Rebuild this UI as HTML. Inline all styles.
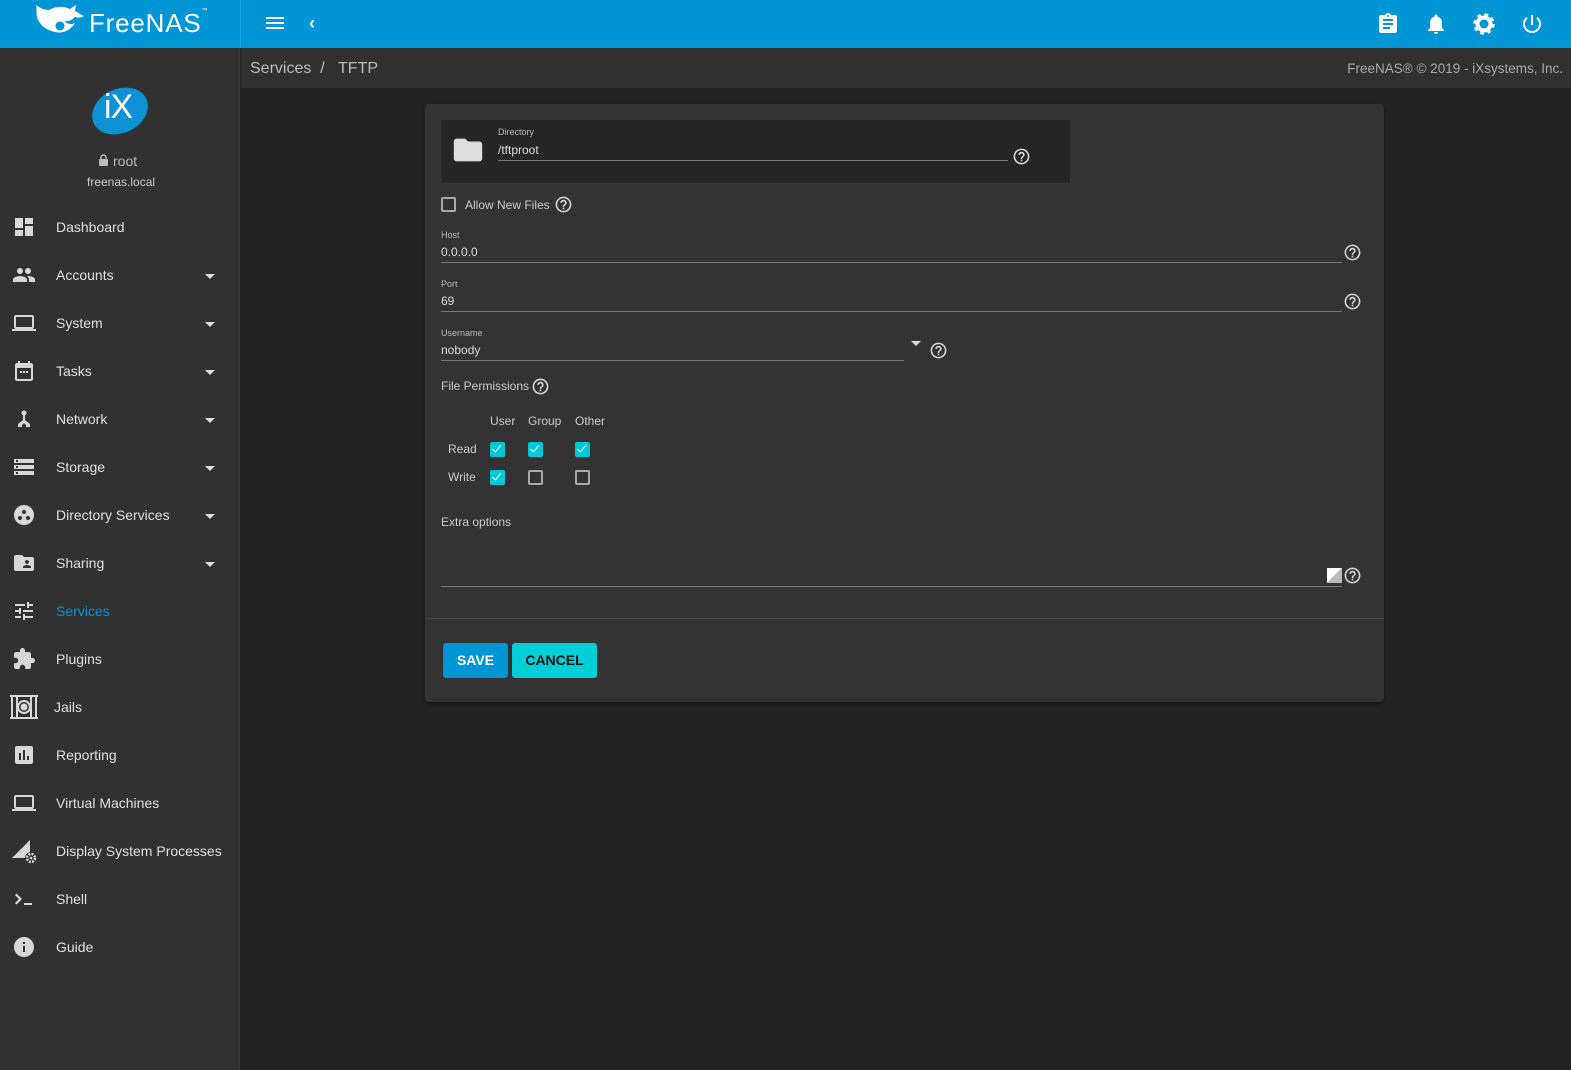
<!DOCTYPE html>
<html><head><meta charset="utf-8"><style>
*{margin:0;padding:0;box-sizing:border-box}
body{width:1571px;height:1070px;background:#232323;font-family:"Liberation Sans",sans-serif;color:#ddd;position:relative;overflow:hidden}
.a{position:absolute}
svg.i{position:absolute;fill:#d8d8d8}
.nav{position:absolute;left:56px;font-size:14px;color:#e0e0e0}
.car{position:absolute;left:205px;width:0;height:0;border-left:5px solid transparent;border-right:5px solid transparent;border-top:5px solid #ddd}
.lbl{position:absolute;font-size:9px;color:#bbb}
.val{position:absolute;font-size:12px;color:#ddd}
.ln{position:absolute;height:1px;background:#777}
.cb{position:absolute;width:15px;height:15px;border:2px solid #aaa;border-radius:2px}
.cc{position:absolute;width:15px;height:15px;background:#00c8d6;border-radius:2px}
.cc:after{content:"";position:absolute;left:4px;top:1px;width:4px;height:8px;border:solid #fff;border-width:0 1.5px 1.5px 0;transform:rotate(40deg)}
.t{position:absolute;font-size:12px;color:#ccc}
</style></head><body>
<svg width="0" height="0" style="position:absolute"><defs>
<symbol id="h" viewBox="0 0 24 24"><path d="M11 18h2v-2h-2v2zm1-16C6.48 2 2 6.48 2 12s4.48 10 10 10 10-4.48 10-10S17.52 2 12 2zm0 18c-4.41 0-8-3.59-8-8s3.59-8 8-8 8 3.59 8 8-3.59 8-8 8zm0-14c-2.21 0-4 1.79-4 4h2c0-1.1.9-2 2-2s2 .9 2 2c0 2-3 1.75-3 5h2c0-2.25 3-2.5 3-5 0-2.21-1.79-4-4-4z"/></symbol>
</defs></svg>
<div class="a" style="left:0;top:0;width:1571px;height:48px;background:#0095d5"></div>
<div class="a" style="left:240px;top:0;width:1px;height:48px;background:#1aa3de"></div>
<svg class="a" style="left:34px;top:3px" width="52" height="40" viewBox="0 0 52 40"><path fill="#fff" d="M2 2c4 3 8 5 13 5 7-4 15-4 21-1l6-4-1 6c4 2 6 4 9 5-3 2-6 2-9 1-3 3-7 5-11 4 3 3 7 4 11 2-4 7-12 11-20 9C11 27 5 21 3 14 2 9 3 5 2 2z"/><circle cx="26" cy="23" r="4.5" fill="#0095d5"/></svg>
<div class="a" style="left:89px;top:8px;font-size:26px;color:#fff;letter-spacing:0.8px">FreeNAS<span style="font-size:6px;vertical-align:top">™</span></div>
<div class="a" style="left:266px;top:17px;width:18px;height:2px;background:#fff;box-shadow:0 5px 0 #fff,0 10px 0 #fff"></div>
<div class="a" style="left:309px;top:13px;font-size:18px;color:#fff;font-weight:bold">‹</div>
<svg class="i" style="left:1376px;top:12px;fill:#fff" width="24" height="24" viewBox="0 0 24 24"><path d="M19 3h-4.18C14.4 1.84 13.3 1 12 1c-1.3 0-2.4.84-2.82 2H5c-1.1 0-2 .9-2 2v14c0 1.1.9 2 2 2h14c1.1 0 2-.9 2-2V5c0-1.1-.9-2-2-2zm-7 0c.55 0 1 .45 1 1s-.45 1-1 1-1-.45-1-1 .45-1 1-1zm2 14H7v-2h7v2zm3-4H7v-2h10v2zm0-4H7V7h10v2z"/></svg>
<svg class="i" style="left:1424px;top:12px;fill:#fff" width="24" height="24" viewBox="0 0 24 24"><path d="M12 22c1.1 0 2-.9 2-2h-4c0 1.1.89 2 2 2zm6-6v-5c0-3.07-1.64-5.64-4.5-6.32V4c0-.83-.67-1.5-1.5-1.5s-1.5.67-1.5 1.5v.68C7.630 5.36 6 7.92 6 11v5l-2 2v1h16v-1l-2-2z"/></svg>
<svg class="i" style="left:1472px;top:12px;fill:#fff" width="24" height="24" viewBox="0 0 24 24"><circle cx="12" cy="12" r="6.5" fill="none" stroke="#fff" stroke-width="4"/><circle cx="12" cy="12" r="9" fill="none" stroke="#fff" stroke-width="3.5" stroke-dasharray="3.5 3.6"/></svg>
<svg class="i" style="left:1520px;top:12px;fill:#fff" width="24" height="24" viewBox="0 0 24 24"><path d="M13 3h-2v10h2V3zm4.83 2.17l-1.42 1.42C17.99 7.86 19 9.81 19 12c0 3.87-3.13 7-7 7s-7-3.13-7-7c0-2.19 1.01-4.14 2.58-5.42L6.17 5.17C4.23 6.82 3 9.26 3 12c0 4.97 4.03 9 9 9s9-4.03 9-9c0-2.74-1.23-5.18-3.17-6.830z"/></svg>
<div class="a" style="left:0;top:48px;width:240px;height:1022px;background:#313131;border-right:1px solid #3a3a3a"></div>
<div class="a" style="left:91px;top:89px;width:58px;height:44px;border-radius:50%;background:#0f92d4;transform:rotate(-25deg)"></div>
<div class="a" style="left:104px;top:88px;font-size:34px;color:#fff;letter-spacing:-1px">iX</div>
<svg class="i" style="left:98px;top:154px;fill:#bbb" width="11" height="12" viewBox="0 0 11 12"><rect x="1" y="5" width="9" height="7" rx="1"/><path d="M3 5V3.5a2.5 2.5 0 015 0V5" fill="none" stroke="#bbb" stroke-width="1.5"/></svg>
<div class="a" style="left:113px;top:153px;font-size:14px;color:#bbb">root</div>
<div class="a" style="left:87px;top:175px;font-size:12px;color:#ccc">freenas.local</div>
<svg class="i" style="left:12px;top:215px" width="24" height="24" viewBox="0 0 24 24"><path d="M3 13h8V3H3v10zm0 8h8v-6H3v6zm10 0h8V11h-8v10zm0-18v6h8V3h-8z"/></svg>
<div class="nav" style="top:219px">Dashboard</div>
<svg class="i" style="left:12px;top:263px" width="24" height="24" viewBox="0 0 24 24"><path d="M16 11c1.66 0 2.99-1.34 2.99-3S17.66 5 16 5c-1.66 0-3 1.34-3 3s1.34 3 3 3zm-8 0c1.66 0 2.99-1.34 2.99-3S9.66 5 8 5C6.34 5 5 6.34 5 8s1.34 3 3 3zm0 2c-2.33 0-7 1.17-7 3.5V19h14v-2.5c0-2.33-4.67-3.5-7-3.5zm8 0c-.29 0-.62.02-.97.05 1.16.84 1.97 1.97 1.97 3.45V19h6v-2.5c0-2.33-4.67-3.5-7-3.5z"/></svg>
<div class="nav" style="top:267px">Accounts</div><div class="car" style="top:274px"></div>
<svg class="i" style="left:12px;top:311px" width="24" height="24" viewBox="0 0 24 24"><path d="M20 18c1.1 0 1.99-.9 1.99-2L22 6c0-1.1-.9-2-2-2H4c-1.1 0-2 .9-2 2v10c0 1.1.9 2 2 2H0v2h24v-2h-4zM4 6h16v10H4V6z"/></svg>
<div class="nav" style="top:315px">System</div><div class="car" style="top:322px"></div>
<svg class="i" style="left:12px;top:359px" width="24" height="24" viewBox="0 0 24 24"><path d="M19 4h-1V2h-2v2H8V2H6v2H5c-1.11 0-1.99.9-1.99 2L3 20c0 1.1.89 2 2 2h14c1.1 0 2-.9 2-2V6c0-1.1-.9-2-2-2zm0 16H5V9h14v11zM8 12h2v2H8zm3 0h2v2h-2zm3 0h2v2h-2z"/></svg>
<div class="nav" style="top:363px">Tasks</div><div class="car" style="top:370px"></div>
<svg class="i" style="left:12px;top:407px" width="24" height="24" viewBox="0 0 24 24"><circle cx="12" cy="6" r="2.5"/><path d="M11 8h2v5l5 4v3h-4v-2l-2-2-2 2v2H6v-3l5-4z"/></svg>
<div class="nav" style="top:411px">Network</div><div class="car" style="top:418px"></div>
<svg class="i" style="left:12px;top:455px" width="24" height="24" viewBox="0 0 24 24"><path d="M2 20h20v-4H2v4zm2-3h2v2H4v-2zM2 4v4h20V4H2zm4 3H4V5h2v2zm-4 7h20v-4H2v4zm2-3h2v2H4v-2z"/></svg>
<div class="nav" style="top:459px">Storage</div><div class="car" style="top:466px"></div>
<svg class="i" style="left:12px;top:503px" width="24" height="24" viewBox="0 0 24 24"><path d="M12 2a10 10 0 100 20 10 10 0 000-20zM8 17a2 2 0 110-4 2 2 0 010 4zm2-8a2 2 0 114 0 2 2 0 01-4 0zm6 8a2 2 0 110-4 2 2 0 010 4z"/></svg>
<div class="nav" style="top:507px">Directory Services</div><div class="car" style="top:514px"></div>
<svg class="i" style="left:12px;top:551px" width="24" height="24" viewBox="0 0 24 24"><path d="M20 6h-8l-2-2H4c-1.1 0-1.99.9-1.99 2L2 18c0 1.1.9 2 2 2h16c1.1 0 2-.9 2-2V8c0-1.1-.9-2-2-2zm-5 3c1.1 0 2 .9 2 2s-.9 2-2 2-2-.9-2-2 .9-2 2-2zm4 8h-8v-1c0-1.33 2.67-2 4-2s4 .67 4 2v1z"/></svg>
<div class="nav" style="top:555px">Sharing</div><div class="car" style="top:562px"></div>
<svg class="i" style="left:12px;top:599px" width="24" height="24" viewBox="0 0 24 24"><path d="M3 17v2h6v-2H3zM3 5v2h10V5H3zm10 16v-2h8v-2h-8v-2h-2v6h2zM7 9v2H3v2h4v2h2V9H7zm14 4v-2H11v2h10zm-6-4h2V7h4V5h-4V3h-2v6z"/></svg>
<div class="nav" style="top:603px;color:#0095d5">Services</div>
<svg class="i" style="left:12px;top:647px" width="24" height="24" viewBox="0 0 24 24"><path d="M20.5 11H19V7c0-1.1-.9-2-2-2h-4V3.5C13 2.12 11.88 1 10.5 1S8 2.12 8 3.5V5H4c-1.1 0-1.99.9-1.99 2v3.8H3.5c1.49 0 2.7 1.21 2.7 2.7s-1.21 2.7-2.7 2.7H2V20c0 1.1.9 2 2 2h3.8v-1.5c0-1.49 1.21-2.7 2.7-2.7 1.49 0 2.7 1.21 2.7 2.7V22H17c1.1 0 2-.9 2-2v-4h1.5c1.38 0 2.5-1.12 2.5-2.5S21.88 11 20.5 11z"/></svg>
<div class="nav" style="top:651px">Plugins</div>
<svg class="i" style="left:9px;top:694px" width="30" height="26" viewBox="0 0 30 26"><rect x="1" y="1" width="28" height="2"/><rect x="1" y="23" width="28" height="2"/><rect x="2" y="3" width="2" height="20"/><rect x="7" y="3" width="2" height="20"/><rect x="21" y="3" width="2" height="20"/><rect x="26" y="3" width="2" height="20"/><circle cx="15" cy="13" r="6" fill="none" stroke="#d8d8d8" stroke-width="2"/><circle cx="15" cy="13" r="3.5"/></svg>
<div class="nav" style="top:699px;left:54px">Jails</div>
<svg class="i" style="left:12px;top:743px" width="24" height="24" viewBox="0 0 24 24"><path d="M19 3H5c-1.1 0-2 .9-2 2v14c0 1.1.9 2 2 2h14c1.1 0 2-.9 2-2V5c0-1.1-.9-2-2-2zM9 17H7v-7h2v7zm4 0h-2V7h2v10zm4 0h-2v-4h2v4z"/></svg>
<div class="nav" style="top:747px">Reporting</div>
<svg class="i" style="left:12px;top:791px" width="24" height="24" viewBox="0 0 24 24"><path d="M20 18c1.1 0 1.99-.9 1.99-2L22 6c0-1.1-.9-2-2-2H4c-1.1 0-2 .9-2 2v10c0 1.1.9 2 2 2H0v2h24v-2h-4zM4 6h16v10H4V6z"/></svg>
<div class="nav" style="top:795px">Virtual Machines</div>
<svg class="i" style="left:11px;top:838px" width="26" height="26" viewBox="0 0 26 26"><path d="M1 20L19 2v12a6 6 0 00-5 6z"/><circle cx="20" cy="20" r="4" fill="none" stroke="#d8d8d8" stroke-width="2.5" stroke-dasharray="2 1.2"/><circle cx="20" cy="20" r="1.3"/></svg>
<div class="nav" style="top:843px">Display System Processes</div>
<svg class="i" style="left:12px;top:887px" width="24" height="24" viewBox="0 0 24 24"><path d="M3 8l1.5-1.5L10 12l-5.5 5.5L3 16l4-4z"/><rect x="12" y="16" width="8" height="2"/></svg>
<div class="nav" style="top:891px">Shell</div>
<svg class="i" style="left:12px;top:935px" width="24" height="24" viewBox="0 0 24 24"><path d="M12 2C6.48 2 2 6.48 2 12s4.48 10 10 10 10-4.48 10-10S17.52 2 12 2zm1 15h-2v-6h2v6zm0-8h-2V7h2v2z"/></svg>
<div class="nav" style="top:939px">Guide</div>
<div class="a" style="left:241px;top:48px;width:1330px;height:40px;background:#303030"></div>
<div class="a" style="left:250px;top:60px;font-size:16px;color:#bdbdbd">Services&nbsp;&nbsp;/&nbsp;&nbsp;&nbsp;TFTP</div>
<div class="a" style="right:8px;top:61px;font-size:13.5px;color:#aaa">FreeNAS® © 2019 - iXsystems, Inc.</div>
<div class="a" style="left:425px;top:104px;width:959px;height:598px;background:#333;border-radius:4px;box-shadow:0 2px 3px rgba(0,0,0,.4)"></div>
<div class="a" style="left:441px;top:120px;width:629px;height:63px;background:#252525"></div>
<svg class="i" style="left:451px;top:133px;fill:#ddd" width="34" height="34" viewBox="0 0 24 24"><path d="M10 4H4c-1.1 0-1.99.9-1.99 2L2 18c0 1.1.9 2 2 2h16c1.1 0 2-.9 2-2V8c0-1.1-.9-2-2-2h-8l-2-2z"/></svg>
<div class="lbl" style="left:498px;top:127px">Directory</div>
<div class="val" style="left:498px;top:143px">/tftproot</div>
<div class="ln" style="left:498px;top:160px;width:510px"></div>
<svg class="i" style="left:1012px;top:147px" width="19" height="19"><use href="#h"/></svg>
<div class="cb" style="left:441px;top:197px"></div>
<div class="t" style="left:465px;top:198px">Allow New Files</div>
<svg class="i" style="left:554px;top:195px" width="19" height="19"><use href="#h"/></svg>
<div class="lbl" style="left:441px;top:230px">Host</div>
<div class="val" style="left:441px;top:245px">0.0.0.0</div>
<div class="ln" style="left:441px;top:262px;width:901px"></div>
<svg class="i" style="left:1343px;top:243px" width="19" height="19"><use href="#h"/></svg>
<div class="lbl" style="left:441px;top:279px">Port</div>
<div class="val" style="left:441px;top:294px">69</div>
<div class="ln" style="left:441px;top:311px;width:901px"></div>
<svg class="i" style="left:1343px;top:292px" width="19" height="19"><use href="#h"/></svg>
<div class="lbl" style="left:441px;top:328px">Username</div>
<div class="val" style="left:441px;top:343px">nobody</div>
<div class="ln" style="left:441px;top:360px;width:463px"></div>
<div class="a" style="left:911px;top:341px;border-left:5px solid transparent;border-right:5px solid transparent;border-top:5px solid #ddd"></div>
<svg class="i" style="left:929px;top:341px" width="19" height="19"><use href="#h"/></svg>
<div class="t" style="left:441px;top:379px">File Permissions</div>
<svg class="i" style="left:531px;top:377px" width="19" height="19"><use href="#h"/></svg>
<div class="t" style="left:490px;top:414px">User</div>
<div class="t" style="left:528px;top:414px">Group</div>
<div class="t" style="left:575px;top:414px">Other</div>
<div class="t" style="left:448px;top:442px">Read</div>
<div class="t" style="left:448px;top:470px">Write</div>
<div class="cc" style="left:490px;top:442px"></div>
<div class="cc" style="left:528px;top:442px"></div>
<div class="cc" style="left:575px;top:442px"></div>
<div class="cc" style="left:490px;top:470px"></div>
<div class="cb" style="left:528px;top:470px"></div>
<div class="cb" style="left:575px;top:470px"></div>
<div class="t" style="left:441px;top:515px">Extra options</div>
<div class="ln" style="left:441px;top:586px;width:901px"></div>
<div class="a" style="left:1327px;top:568px;width:15px;height:15px;background:linear-gradient(135deg,#fff 50%,#bbb 50%)"></div>
<svg class="i" style="left:1343px;top:566px" width="19" height="19"><use href="#h"/></svg>
<div class="a" style="left:425px;top:618px;width:959px;height:1px;background:#444"></div>
<div class="a" style="left:443px;top:643px;width:65px;height:35px;background:#0095d5;border-radius:3px;color:#fff;font-size:14px;font-weight:bold;text-align:center;line-height:35px">SAVE</div>
<div class="a" style="left:512px;top:643px;width:85px;height:35px;background:#00cfd8;border-radius:3px;color:#111;font-size:14px;font-weight:bold;text-align:center;line-height:35px">CANCEL</div>
</body></html>
